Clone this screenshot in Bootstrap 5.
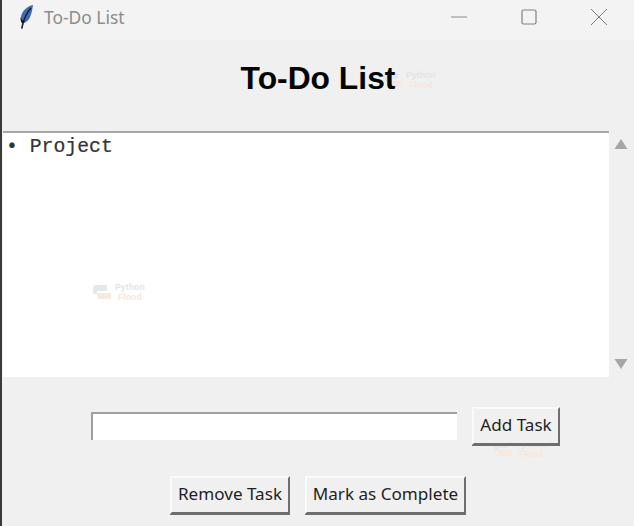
<!DOCTYPE html>
<html lang="en">

<head>
  <meta charset="UTF-8" />
  <title>To-Do List</title>
  <link href="https://cdn.jsdelivr.net/npm/bootstrap@5.3.2/dist/css/bootstrap.min.css" rel="stylesheet" />
  <style>
    html, body { margin: 0; height: 526px; overflow: hidden; background: #f0f0f0; }
    .app-window { width: 634px; height: 526px; border-left: 2px solid #3a3a3a; }
    .title-bar { height: 40px; padding-bottom: 6px; background: #f3f3f3; font-family: "Noto Sans", sans-serif; font-size: 17.4px; color: #8c8c8c; }
    .feather { margin-left: 16px; margin-right: 10px; }
    .win-btn { width: 70px; height: 34px; }
    .head-area { height: 91px; }
    .app-title { position: relative; z-index: 1; font-family: "Liberation Sans", sans-serif; font-weight: 700; font-size: 31.8px; color: #050505; margin: 0 0 15px 0; width: 632px; text-align: center; }
    .list-area { height: 246px; }
    .todo-box { width: 606px; margin-left: 1px; background: #fff; border-top: 2px solid #a6a6a6; font-family: "Liberation Mono", monospace; font-size: 19.8px; line-height: 24px; color: #333; padding: 2px 0 0 3px; white-space: pre; -webkit-text-stroke: 0.2px #333; }
    .scroll-col { width: 24px; padding: 8px 0 8px; }
    .entry-row { margin-top: 30px; padding-left: 89px; gap: 15px; height: 39px; }
    .task-input { width: 366px; height: 28px; background: #fff; border: 0; border-top: 2px solid #a0a0a0; border-left: 2px solid #a0a0a0; border-radius: 0; margin-top: 5px; outline: 0; }
    .tk-btn { position: relative; z-index: 1; font-family: "Noto Sans", sans-serif; font-size: 17.1px; line-height: 1; color: #1f1f24; background: #f0f0f0; border: 2px solid; border-color: #fafafa #6e6e6e #6e6e6e #fafafa; border-radius: 0; padding: 0 0 2px; box-shadow: 0 1px 0 #6e6e6e; }
    .btn-add { width: 88px; height: 38px; }
    .action-row { margin-top: 30px; padding-left: 168px; gap: 15px; }
    .btn-remove { width: 120px; height: 38px; }
    .btn-mark { width: 161px; height: 38px; }
    .wmark { position: absolute; z-index: 0; font-family: "Liberation Sans", sans-serif; font-weight: 700; font-size: 8.800px; line-height: 10px; text-align: center; }
    .wmark .w1 { color: #e2e4ea; display: block; }
    .wmark .w2 { color: #f8e6da; display: block; }
    .wmark svg { position: absolute; left: -23px; top: 1px; }
    .w-a { left: 404px; top: 70px; }
    .w-b { left: 113px; top: 282px; }
    .w-c { left: 514px; top: 439px; }
  </style>
</head>

<body>
  <div class="app-window position-relative d-flex flex-column">
    <div class="title-bar d-flex align-items-center">
      <svg class="feather" width="16" height="26" viewBox="0 0 16 26">
        <path d="M15 1C9 2 4 7 3 13c-.4 2.500 0 5 1 6l-1 6 1.500 0 1-6c5-1 7-6 8.500-12z" fill="#3f6cb0" />
        <path d="M13 4C9 8 6 13 4 24" stroke="#10151f" stroke-width="1.200" fill="none" />
        <path d="M2.500 13c0 3 .5 5 1.500 6l3-1C5 17 4 16 2.500 13z" fill="#15181f" />
      </svg>
      <span class="flex-grow-1">To-Do List</span>
      <div class="d-flex">
        <div class="win-btn d-flex align-items-center justify-content-center">
          <svg width="16" height="16" viewBox="0 0 16 16"><path d="M0 8h16" stroke="#8a8a8a" stroke-width="1" /></svg>
        </div>
        <div class="win-btn d-flex align-items-center justify-content-center">
          <svg width="16" height="16" viewBox="0 0 16 16"><rect x="1" y="1" width="14" height="14" rx="1.500" fill="none" stroke="#808080" stroke-width="1.200" /></svg>
        </div>
        <div class="win-btn d-flex align-items-center justify-content-center">
          <svg width="16" height="16" viewBox="0 0 16 16"><path d="M0 0l16 16M16 0L0 16" stroke="#808080" stroke-width="1" /></svg>
        </div>
      </div>
    </div>

    <div class="head-area d-flex align-items-center">
      <h1 class="app-title">To-Do List</h1>
    </div>

    <div class="list-area d-flex">
      <div class="todo-box">• Project</div>
      <div class="scroll-col d-flex flex-column justify-content-between align-items-center">
        <svg width="14" height="10" viewBox="0 0 14 10"><path d="M7 0l6.500 10H.5z" fill="#a6a6a6" /></svg>
        <svg width="14" height="10" viewBox="0 0 14 10"><path d="M.5 0h13L7 10z" fill="#a6a6a6" /></svg>
      </div>
    </div>

    <div class="entry-row d-flex">
      <input class="task-input form-control" type="text" />
      <button class="tk-btn btn-add btn">Add Task</button>
    </div>

    <div class="action-row d-flex">
      <button class="tk-btn btn-remove btn">Remove Task</button>
      <button class="tk-btn btn-mark btn">Mark as Complete</button>
    </div>

    <div class="wmark w-a">
      <svg width="20" height="18" viewBox="0 0 20 18"><path d="M3 2h12v6H5v3H1V4z" fill="#e6e8ee" /><path d="M5 10h14v6H6z" fill="#f9e8dd" /></svg>
      <span class="w1">Python</span><span class="w2">Flood</span>
    </div>
    <div class="wmark w-b">
      <svg width="20" height="18" viewBox="0 0 20 18"><path d="M3 2h12v6H5v3H1V4z" fill="#e6e8ee" /><path d="M5 10h14v6H6z" fill="#f9e8dd" /></svg>
      <span class="w1">Python</span><span class="w2">Flood</span>
    </div>
    <div class="wmark w-c">
      <svg width="20" height="18" viewBox="0 0 20 18"><path d="M3 2h12v6H5v3H1V4z" fill="#e6e8ee" /><path d="M5 10h14v6H6z" fill="#f9e8dd" /></svg>
      <span class="w1">Python</span><span class="w2">Flood</span>
    </div>
  </div>

  <script src="https://cdn.jsdelivr.net/npm/bootstrap@5.3.2/dist/js/bootstrap.bundle.min.js"></script>
</body>

</html>
